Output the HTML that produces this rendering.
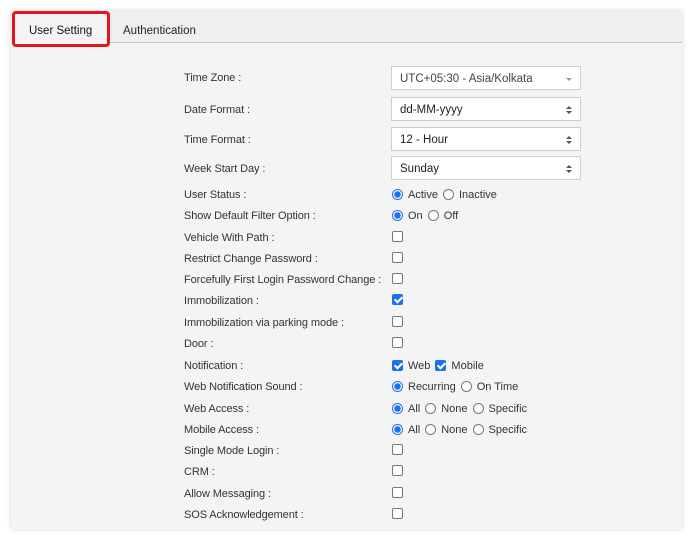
<!DOCTYPE html>
<html><head><style>
*{box-sizing:border-box;margin:0;padding:0}
body{width:693px;height:540px;background:#fff;font-family:"Liberation Sans",sans-serif;font-size:11px;color:#333;position:relative;overflow:hidden}
.panel{position:absolute;left:11px;top:11px;width:671px;height:518px;background:#f4f4f4;box-shadow:0 0 5px rgba(0,0,0,.18)}
.strip{position:absolute;left:0;top:0;width:671px;height:32px;background:#efefef;border-bottom:1px solid #c8c8c8}
.tab{position:absolute;font-size:11.5px;color:#222}
.red{position:absolute;left:12px;top:11px;width:98px;height:36px;border:3px solid #e8141c;border-radius:4px;background:#f4f4f4}
.l{position:absolute;left:184px;white-space:nowrap;letter-spacing:-0.1px}
.c{position:absolute;left:391px;white-space:nowrap;display:flex;align-items:center}
.c span,.c b{font-weight:normal;position:relative;top:1px}
.sel{position:absolute;left:391px;width:190px;height:24px;background:#fff;border:1px solid #ccc;padding-left:8px;line-height:24px;font-size:11.5px;color:#222}
.sel svg{position:absolute;right:7px;top:7px}
.r{width:11px;height:11px;border-radius:50%;border:1px solid #777;background:#fff;display:inline-block;margin-right:5px;margin-left:1px}
.r.on{border:1px solid #1a73e8;background:radial-gradient(circle,#1a73e8 0 3px,#fff 3.5px)}
.k{width:11px;height:11px;border-radius:2px;border:1px solid #777;background:#fff;display:inline-block;margin-right:5px;margin-left:1px;position:relative}
.k.on{background:#1a73e8;border-color:#1a73e8}
.k.on::after{content:"";position:absolute;left:3px;top:0px;width:3px;height:6px;border:solid #fff;border-width:0 2px 2px 0;transform:rotate(45deg)}
.g{margin-right:4px}
</style></head><body>
<div class="panel"><div class="strip"></div></div>
<div class="red"></div>
<div class="tab" style="left:29px;top:25px;color:#111">User Setting</div>
<div class="tab" style="left:123px;top:25px">Authentication</div>

<div class="l" style="top:72px">Time Zone :</div>
<div class="sel" style="top:66px;color:#444">UTC+05:30 - Asia/Kolkata<svg width="8" height="10" viewBox="0 0 8 10"><path d="M1 4h6l-3 3z" fill="#999"/></svg></div>
<div class="l" style="top:104px">Date Format :</div>
<div class="sel" style="top:97px">dd-MM-yyyy<svg width="8" height="10" viewBox="0 0 8 10"><path d="M1 4h6L4 1zM1 6h6L4 9z" fill="#555"/></svg></div>
<div class="l" style="top:134px">Time Format :</div>
<div class="sel" style="top:127px">12 - Hour<svg width="8" height="10" viewBox="0 0 8 10"><path d="M1 4h6L4 1zM1 6h6L4 9z" fill="#555"/></svg></div>
<div class="l" style="top:163px">Week Start Day :</div>
<div class="sel" style="top:156px">Sunday<svg width="8" height="10" viewBox="0 0 8 10"><path d="M1 4h6L4 1zM1 6h6L4 9z" fill="#555"/></svg></div>

<div class="l" style="top:189px">User Status :</div>
<div class="c" style="top:188px"><i class="r on"></i><span class="g">Active</span><i class="r"></i><span>Inactive</span></div>
<div class="l" style="top:210px">Show Default Filter Option :</div>
<div class="c" style="top:209px"><i class="r on"></i><span class="g">On</span><i class="r"></i><span>Off</span></div>
<div class="l" style="top:232px">Vehicle With Path :</div><div class="c" style="top:231px"><i class="k"></i></div>
<div class="l" style="top:253px">Restrict Change Password :</div><div class="c" style="top:252px"><i class="k"></i></div>
<div class="l" style="top:274px">Forcefully First Login Password Change :</div><div class="c" style="top:273px"><i class="k"></i></div>
<div class="l" style="top:295px">Immobilization :</div><div class="c" style="top:294px"><i class="k on"></i></div>
<div class="l" style="top:317px">Immobilization via parking mode :</div><div class="c" style="top:316px"><i class="k"></i></div>
<div class="l" style="top:338px">Door :</div><div class="c" style="top:337px"><i class="k"></i></div>
<div class="l" style="top:360px">Notification :</div>
<div class="c" style="top:359px"><i class="k on"></i><span class="g">Web</span><i class="k on"></i><span>Mobile</span></div>
<div class="l" style="top:381px">Web Notification Sound :</div>
<div class="c" style="top:380px"><i class="r on"></i><span class="g">Recurring</span><i class="r"></i><span>On Time</span></div>
<div class="l" style="top:403px">Web Access :</div>
<div class="c" style="top:402px"><i class="r on"></i><span class="g">All</span><i class="r"></i><span class="g">None</span><i class="r"></i><span>Specific</span></div>
<div class="l" style="top:424px">Mobile Access :</div>
<div class="c" style="top:423px"><i class="r on"></i><span class="g">All</span><i class="r"></i><span class="g">None</span><i class="r"></i><span>Specific</span></div>
<div class="l" style="top:445px">Single Mode Login :</div><div class="c" style="top:444px"><i class="k"></i></div>
<div class="l" style="top:466px">CRM :</div><div class="c" style="top:465px"><i class="k"></i></div>
<div class="l" style="top:488px">Allow Messaging :</div><div class="c" style="top:487px"><i class="k"></i></div>
<div class="l" style="top:509px">SOS Acknowledgement :</div><div class="c" style="top:508px"><i class="k"></i></div>
</body></html>
